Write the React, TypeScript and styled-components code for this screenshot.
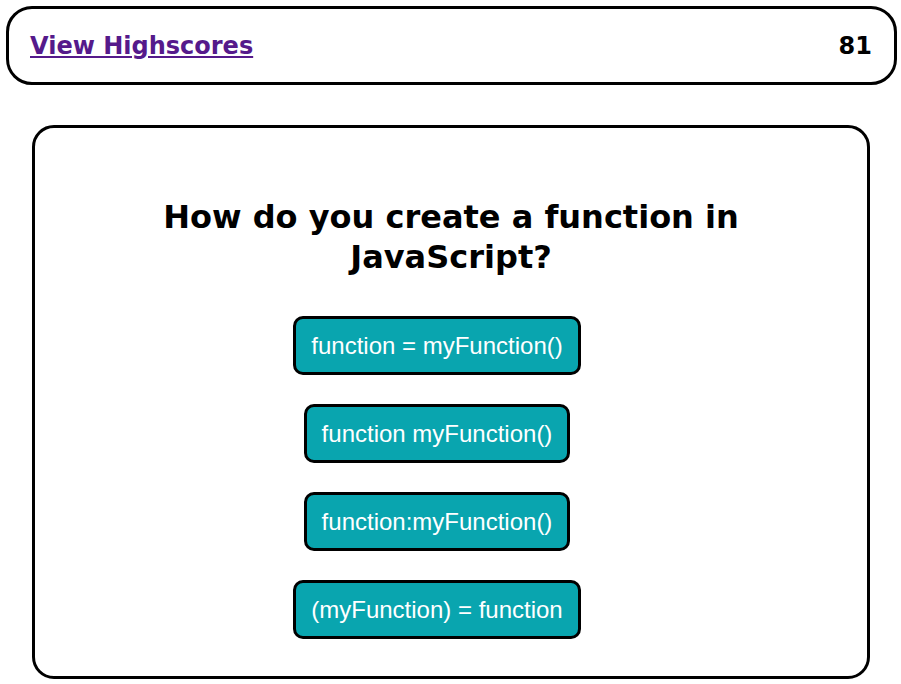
import { createGlobalStyle, styled } from "styled-components";

const GlobalStyle = createGlobalStyle`
  body {
    margin: 0;
    background: #ffffff;
    font-family: 'DejaVu Sans', Verdana, sans-serif;
  }
`

const Header = styled.header`
  margin: 6px 4px 0 6px;
  height: 73px;
  border: solid 3px black;
  border-radius: 26px;
  display: flex;
  align-items: center;
  justify-content: space-between;
  padding: 0 22px 0 21px;
`

const HighscoreLink = styled.a`
  font-size: 24px;
  font-weight: bold;
  color: #551a8b;
  text-decoration: underline;
  cursor: pointer;
`

const Timer = styled.span`
  font-size: 24px;
  font-weight: bold;
  color: black;
`

const Card = styled.main`
  margin: 40px 31px 0 32px;
  height: 554px;
  box-sizing: border-box;
  border: solid 3px black;
  border-radius: 22px;
  padding-top: 69px;
  display: flex;
  flex-direction: column;
  align-items: center;
`

const Question = styled.h1`
  margin: 0;
  max-width: 600px;
  font-size: 32px;
  line-height: 40px;
  text-align: center;
`

const Choices = styled.div`
  margin: 39px 28px 0 0;
  display: flex;
  flex-direction: column;
  align-items: center;
  gap: 29px;
`

const Choice = styled.button`
  margin: 0;
  padding: 13px 15px;
  border: solid 3px black;
  border-radius: 10px;
  background: #09a5af;
  color: #ffffff;
  font-family: 'Liberation Sans', Arial, sans-serif;
  font-size: 24px;
  line-height: 27px;
  cursor: pointer;
`

const answers = [
  "function = myFunction()",
  "function myFunction()",
  "function:myFunction()",
  "(myFunction) = function",
]

const App = () => {
  return (
    <>
      <GlobalStyle />
      <Header>
        <HighscoreLink href="#">View Highscores</HighscoreLink>
        <Timer>81</Timer>
      </Header>
      <Card>
        <Question>How do you create a function in JavaScript?</Question>
        <Choices>
          {answers.map(answer => <Choice key={answer}>{answer}</Choice>)}
        </Choices>
      </Card>
    </>
  )
}

export default App;
